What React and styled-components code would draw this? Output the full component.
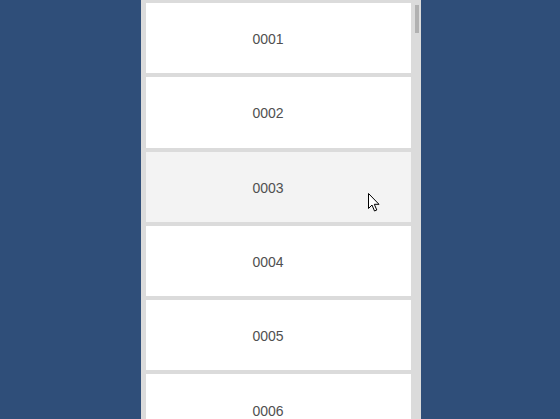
import React from "react";
import styled, {createGlobalStyle} from "styled-components";

const GlobalStyle = createGlobalStyle`
    html, body {
        margin:0;
        padding:0;
        background:#2f4e79;
        font-family:"Liberation Sans", Arial, sans-serif;
    }
`

const Page = styled.div`
    height:419px;
    display:flex;
    justify-content:center;
    padding-left:2px;
    overflow:hidden;
`

const Panel = styled.div`
    position:relative;
    width:280px;
    height:419px;
    background:#dbdbdb;
    display:flex;
    overflow:hidden;
`

const List = styled.div`
    flex:1;
    padding:3px 0 0 5px;
    display:flex;
    flex-direction:column;
    gap:4px;
`

const Item = styled.div`
    height:70.3px;
    flex-shrink:0;
    background:${props => props.hover ? "#f3f3f3" : "#ffffff"};
    display:flex;
    align-items:center;
    justify-content:center;
    font-size:14px;
    color:#505050;
    padding:2px 21px 0 0;
    box-sizing:border-box;
`

const Track = styled.div`
    width:10px;
    padding:5px 2px 0 4px;
    box-sizing:border-box;
`

const Thumb = styled.div`
    width:4px;
    height:28px;
    background:#b1b1b1;
`

const Cursor = styled.svg`
    position:absolute;
    left:227px;
    top:193px;
`

const items = ["0001", "0002", "0003", "0004", "0005", "0006"]

const App = () => {
    return(
        <>
        <GlobalStyle />
        <Page>
            <Panel>
                <List>
                    {items.map(item => (
                        <Item key={item} hover={item === "0003"}>{item}</Item>
                    ))}
                </List>
                <Track>
                    <Thumb />
                </Track>
                <Cursor width="13" height="20" viewBox="0 0 13 20">
                    <path d="M0.5 0.5 L0.5 15.5 L4 12 L6.5 18 L8.8 17 L6.3 11.3 L11 11.3 Z" fill="#ffffff" stroke="#000000" strokeWidth="1" strokeLinejoin="miter" />
                </Cursor>
            </Panel>
        </Page>
        </>
    )
}

export default App
